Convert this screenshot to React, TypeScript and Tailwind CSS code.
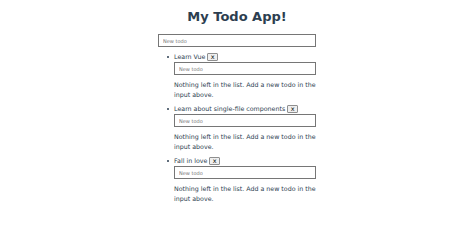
import { useState } from 'react'

const font = { fontFamily: '"DejaVu Sans", sans-serif' }

function TodoItem({ label }: { label: string }) {
  return (
    <li className="relative pl-[16px] mb-[4px]">
      <span className="absolute left-[9px] top-[4px] w-[2px] h-[2px] rounded-full bg-[#2c3e50]" />
      <div className="flex items-center h-[10px] leading-none">
        <span>{label}</span>
        <button className="ml-[2px] border border-[#8f8f8f] bg-[#efefef] text-black text-[6.5px] leading-none px-[2.5px] h-[8px] rounded-[1px]">x</button>
      </div>
      <input
        placeholder="New todo"
        className="block w-full h-[13px] border border-[#767676] px-[4px] text-[5px] placeholder:text-[#757575] outline-none"
      />
      <p className="mt-[5px] leading-[10px]">Nothing left in the list. Add a new todo in the input above.</p>
    </li>
  )
}

export default function App() {
  const [todos] = useState(['Learn Vue', 'Learn about single-file components', 'Fall in love'])

  return (
    <div className="min-h-screen bg-white text-[#2c3e50] pt-[7px]" style={font}>
      <h1 className="text-center text-[13px] font-bold leading-[20px]">My Todo App!</h1>
      <div className="w-[158px] mx-auto mt-[7px] text-[6.3px]">
        <input
          placeholder="New todo"
          className="block w-full h-[13px] border border-[#767676] px-[4px] text-[5px] placeholder:text-[#757575] outline-none"
        />
        <ul className="mt-[5px]">
          {todos.map((t) => (
            <TodoItem key={t} label={t} />
          ))}
        </ul>
      </div>
    </div>
  )
}
